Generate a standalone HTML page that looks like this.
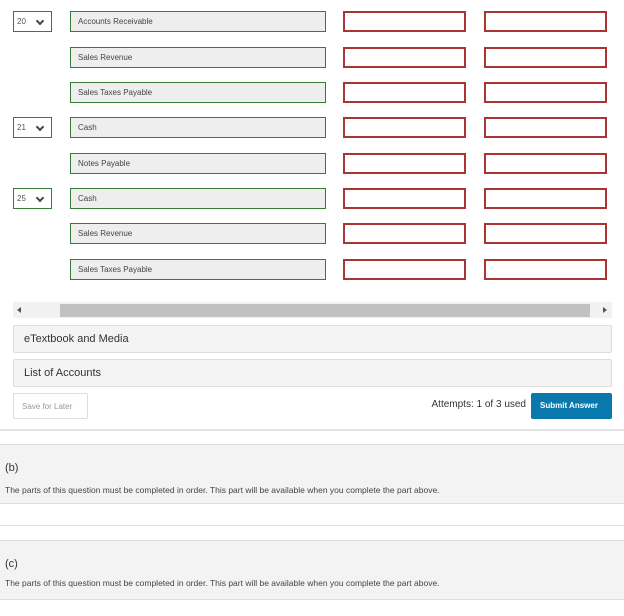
<!DOCTYPE html><html><head><style>
body{margin:0;width:624px;height:616px;background:#fff;font-family:"Liberation Sans",sans-serif;position:relative;overflow:hidden}
.a{position:absolute;box-sizing:border-box}
.sel{left:13px;width:39px;height:21px;border:1px solid #3a7a3a;font-size:8px;color:#555;padding:0 0 0 3px;background:#fff;display:flex;align-items:center}
.sel:after{content:"";position:absolute;right:8px;top:6px;width:4px;height:4px;border-right:2px solid #444;border-bottom:2px solid #444;transform:rotate(45deg)}
.acc{left:70px;width:256px;height:21px;border:1px solid #3a7a3a;background:#eee;font-size:8px;color:#444;padding:0 0 0 7px;display:flex;align-items:center}
.r1,.r2{width:123px;height:21px;border:2px solid #a33;background:#fff}
.r1{left:343px}.r2{left:484px}
.box{left:13px;width:599px;height:28px;background:#f4f4f4;border:1px solid #ddd;border-radius:2px;font-size:11px;color:#333;padding:0 0 0 10px;display:flex;align-items:center}
.part{left:0;width:624px;height:60px;background:#f3f3f3;border-top:1px solid #ddd;border-bottom:1px solid #ddd}
</style></head><body>
<div class="a sel" style="top:11px">20</div><div class="a acc" style="top:11px">Accounts Receivable</div>
<div class="a acc" style="top:47px">Sales Revenue</div>
<div class="a acc" style="top:82px">Sales Taxes Payable</div>
<div class="a sel" style="top:117px">21</div><div class="a acc" style="top:117px">Cash</div>
<div class="a acc" style="top:153px">Notes Payable</div>
<div class="a sel" style="top:188px">25</div><div class="a acc" style="top:188px">Cash</div>
<div class="a acc" style="top:223px">Sales Revenue</div>
<div class="a acc" style="top:259px">Sales Taxes Payable</div>
<div class="a r1" style="top:11px"></div><div class="a r2" style="top:11px"></div>
<div class="a r1" style="top:47px"></div><div class="a r2" style="top:47px"></div>
<div class="a r1" style="top:82px"></div><div class="a r2" style="top:82px"></div>
<div class="a r1" style="top:117px"></div><div class="a r2" style="top:117px"></div>
<div class="a r1" style="top:153px"></div><div class="a r2" style="top:153px"></div>
<div class="a r1" style="top:188px"></div><div class="a r2" style="top:188px"></div>
<div class="a r1" style="top:223px"></div><div class="a r2" style="top:223px"></div>
<div class="a r1" style="top:259px"></div><div class="a r2" style="top:259px"></div>
<div class="a" style="left:13px;top:302px;width:599px;height:16px;background:#f1f1f1"></div>
<div class="a" style="left:60px;top:304px;width:530px;height:13px;background:#c1c1c1"></div>
<div class="a" style="left:17px;top:307px;width:0;height:0;border:3px solid transparent;border-right:4px solid #555;border-left:0"></div>
<div class="a" style="left:603px;top:307px;width:0;height:0;border:3px solid transparent;border-left:4px solid #555;border-right:0"></div>
<div class="a box" style="top:325px">eTextbook and Media</div>
<div class="a box" style="top:359px">List of Accounts</div>
<div class="a" style="left:13px;top:393px;width:75px;height:26px;border:1px solid #ddd;border-radius:2px;font-size:8px;color:#999;padding:8px 0 0 8px">Save for Later</div>
<div class="a" style="left:400px;top:399px;width:126px;font-size:10px;color:#333;text-align:right">Attempts: 1 of 3 used</div>
<div class="a" style="left:531px;top:393px;width:81px;height:26px;background:#0878ad;border-radius:2px;font-size:8px;font-weight:bold;color:#fff;padding:8px 0 0 9px">Submit Answer</div>
<div class="a" style="left:0;top:429px;width:624px;height:2px;background:#e3e3e3"></div>
<div class="a part" style="top:444px"></div>
<div class="a" style="left:5px;top:462px;font-size:11px;color:#333">(b)</div>
<div class="a" style="left:5px;top:485px;font-size:8.5px;color:#444">The parts of this question must be completed in order. This part will be available when you complete the part above.</div>
<div class="a" style="left:0;top:525px;width:624px;height:1px;background:#ddd"></div>
<div class="a part" style="top:540px"></div>
<div class="a" style="left:5px;top:558px;font-size:11px;color:#333">(c)</div>
<div class="a" style="left:5px;top:578px;font-size:8.5px;color:#444">The parts of this question must be completed in order. This part will be available when you complete the part above.</div>
</body></html>
